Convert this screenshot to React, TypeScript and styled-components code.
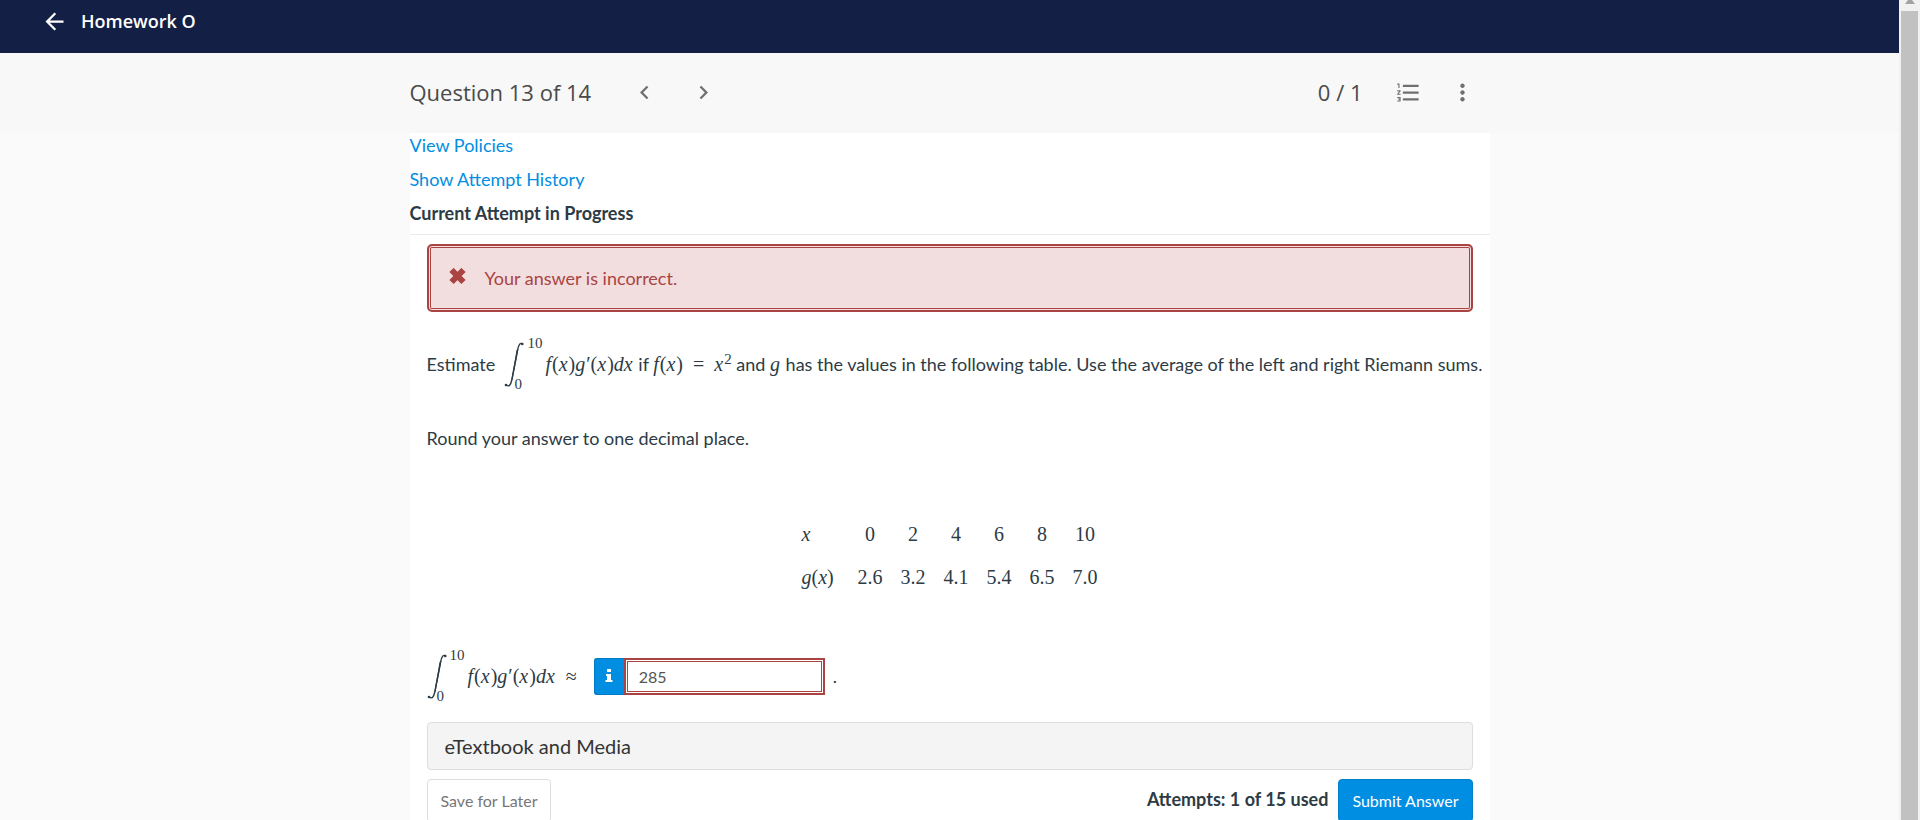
import React from "react";
import styled, { createGlobalStyle, css } from "styled-components";
import {
  MdArrowBack,
  MdChevronLeft,
  MdChevronRight,
  MdFormatListNumbered,
  MdMoreVert,
} from "react-icons/md";

const GlobalStyle = createGlobalStyle`
  * { box-sizing: border-box; }
  body {
    margin: 0;
    background: #fafafa;
    color: #2d3b45;
    font-family: Lato, "Liberation Sans", sans-serif;
    font-size: 18px;
    line-height: 24px;
  }
  button, input { font-family: inherit; }
`;

const errorFrame = css<{ $fill: string }>`
  border: 2px solid #a94442;
  background: ${(p) => p.$fill};
  box-shadow: inset 0 0 0 1px ${(p) => p.$fill}, inset 0 0 0 2px #a94442;
`;

const Window = styled.div`
  display: flex;
  height: 100vh;
  overflow: hidden;
`;

const Page = styled.div`
  flex: 1;
  min-width: 0;
`;

const TopBar = styled.header`
  display: flex;
  align-items: flex-start;
  height: 53px;
  padding: 8px 41px;
  gap: 13px;
  background: #141f45;
  color: #fff;
`;

const IconButton = styled.button<{ $tone?: string }>`
  display: flex;
  padding: 0;
  border: 0;
  background: none;
  color: ${(p) => p.$tone || "#6f6f6f"};
  font-size: 27px;
  cursor: pointer;
`;

const AssignmentTitle = styled.h1`
  margin: 0;
  font: 600 18px/27px "Open Sans", sans-serif;
`;

const QuestionBar = styled.div`
  height: 80px;
  background: #f8f8f8;
`;

const QuestionBarInner = styled.div`
  display: flex;
  align-items: center;
  max-width: 1080px;
  height: 100%;
  margin: 0 auto;
  padding: 0 14px 2px 0;
  color: #4a4a4a;
  font: 400 22px/30px "Open Sans", sans-serif;
`;

const QuestionTitle = styled.h2`
  margin: 0 40px 0 0;
  font: inherit;
`;

const Pager = styled.nav`
  display: flex;
  gap: 32px;
`;

const Tools = styled.div`
  display: flex;
  align-items: center;
  gap: 27px;
  margin-left: auto;
`;

const Score = styled.span`
  margin-right: 5px;
`;

const Panel = styled.main`
  max-width: 1080px;
  margin: 0 auto;
  background: #fff;
`;

const PanelHead = styled.div`
  display: flex;
  flex-direction: column;
  align-items: flex-start;
  gap: 10px;
  padding-bottom: 9px;
  border-bottom: 1px solid #ebebeb;
`;

const TextLink = styled.a`
  color: #008ee2;
  text-decoration: none;
`;

const Status = styled.h3`
  margin: 0;
  font-size: 18px;
  line-height: 24px;
  font-weight: 700;
`;

const Body = styled.div`
  padding: 9px 17px 0;
`;

const Alert = styled.div<{ $fill: string }>`
  display: flex;
  align-items: center;
  gap: 18px;
  height: 68px;
  padding: 0 20px;
  border-radius: 5px;
  color: #a94442;
  ${errorFrame}
`;

const Problem = styled.p`
  display: flex;
  align-items: center;
  height: 64px;
  margin: 20px 0 30px;
  white-space: pre;
`;

const Plain = styled.p`
  margin: 0;
`;

const MathText = styled.span`
  display: inline-flex;
  align-items: center;
  font-family: "Liberation Serif", serif;
  font-size: 20px;
  line-height: 24px;
  white-space: pre;

  i { padding-right: 1px; }
  sup { font-size: 15px; line-height: 15px; align-self: flex-start; }
`;

const Sign = styled.svg`
  width: 20px;
  height: 47px;
`;

const Limits = styled.span`
  display: flex;
  flex-direction: column;
  justify-content: space-between;
  height: 56px;
  font-size: 15px;
  line-height: 15px;
`;

const Upper = styled.span`
  padding-left: 3px;
`;

const Lower = styled.span`
  margin-left: -10px;
`;

const Integrand = styled.span`
  padding-left: 3px;
`;

const Values = styled.table`
  margin: 62px auto 50px;
  padding-left: 9px;
  border-spacing: 0;
  font: 20px/24px "Liberation Serif", serif;

  th, td { height: 43px; padding: 0; font-weight: 400; text-align: center; }
  th { width: 47px; text-align: left; }
  td { width: 43px; }
`;

const AnswerRow = styled.div`
  display: flex;
  align-items: center;
  height: 56px;
`;

const InputGroup = styled.div`
  display: flex;
  height: 37px;
  margin: 0 8px 0 17px;
`;

const InfoButton = styled.button`
  display: flex;
  align-items: center;
  justify-content: center;
  width: 30px;
  padding: 0;
  border: 1px solid #0079c1;
  border-right: 0;
  border-radius: 3px 0 0 3px;
  background: #008ee2;
  color: #fff;
`;

const AnswerInput = styled.input<{ $fill: string }>`
  width: 201px;
  padding: 0 13px;
  color: #555;
  font-size: 16px;
  ${errorFrame}
`;

const MediaButton = styled.button`
  display: block;
  width: 100%;
  height: 48px;
  margin: 18px 0 9px;
  padding: 0 17px;
  border: 1px solid #ddd;
  border-radius: 4px;
  background: #f4f4f4;
  color: #333;
  font-size: 20px;
  text-align: left;
`;

const Footer = styled.div`
  display: flex;
  align-items: flex-start;
  gap: 10px;
`;

const ActionButton = styled.button<{ $primary?: boolean }>`
  height: 43px;
  padding: 0 13px;
  border: 1px solid ${(p) => (p.$primary ? "#0081cd" : "#ddd")};
  border-radius: 4px;
  background: ${(p) => (p.$primary ? "#008ee2" : "#fff")};
  color: ${(p) => (p.$primary ? "#fff" : "#777")};
  font-size: 16px;
  cursor: pointer;
`;

const Attempts = styled.strong`
  margin: 8px 0 0 auto;
  font-weight: 700;
`;

const ScrollTrack = styled.div`
  display: flex;
  flex-direction: column;
  align-items: center;
  width: 21px;
  background: #f1f1f1;
`;

const ScrollUp = styled.svg`
  width: 10px;
  height: 4px;
  margin-bottom: 7px;
  flex: none;
`;

const ScrollThumb = styled.div`
  flex: 1;
  width: 17px;
  background: #c1c1c1;
`;

const xs = ["0", "2", "4", "6", "8", "10"];
const gs = ["2.6", "3.2", "4.1", "5.4", "6.5", "7.0"];

function Integral() {
  return (
    <MathText>
      <Sign viewBox="0 0 20 47" aria-label="integral">
        <path
          d="M2.4 44.2C5 46 6.700 44 7.800 39L13.600 9C14.600 3.500 16.200 1.500 18.400 2.700"
          fill="none"
          stroke="#2d3b45"
          strokeWidth="1.400"
          strokeLinecap="round"
        />
        <path d="M7 41L12.600 9L14.400 8L8.700 38Z" fill="#2d3b45" />
        <circle cx="2" cy="44" r="1.300" fill="#2d3b45" />
        <circle cx="18.300" cy="3" r="1.300" fill="#2d3b45" />
      </Sign>
      <Limits>
        <Upper>10</Upper>
        <Lower>0</Lower>
      </Limits>
      <Integrand>
        <i>f</i>(<i>x</i>)<i>g</i>′(<i>x</i>)<i>dx</i>
      </Integrand>
    </MathText>
  );
}

export default function App() {
  return (
    <Window>
      <GlobalStyle />
      <Page>
        <TopBar>
          <IconButton $tone="#fff" aria-label="Back">
            <MdArrowBack />
          </IconButton>
          <AssignmentTitle>Homework O</AssignmentTitle>
        </TopBar>
        <QuestionBar>
          <QuestionBarInner>
            <QuestionTitle>Question 13 of 14</QuestionTitle>
            <Pager aria-label="Questions">
              <IconButton aria-label="Previous question">
                <MdChevronLeft />
              </IconButton>
              <IconButton aria-label="Next question">
                <MdChevronRight />
              </IconButton>
            </Pager>
            <Tools>
              <Score>0 / 1</Score>
              <IconButton aria-label="Question list">
                <MdFormatListNumbered />
              </IconButton>
              <IconButton aria-label="More options">
                <MdMoreVert />
              </IconButton>
            </Tools>
          </QuestionBarInner>
        </QuestionBar>
        <Panel>
          <PanelHead>
            <TextLink href="#policies">View Policies</TextLink>
            <TextLink href="#history">Show Attempt History</TextLink>
            <Status>Current Attempt in Progress</Status>
          </PanelHead>
          <Body>
            <Alert role="alert" $fill="#f2dede">
              <svg width="18" height="20" viewBox="0 0 18 20" aria-hidden="true">
                <path
                  d="M2.500 2L14.500 14M14.500 2L2.500 14"
                  stroke="#a94442"
                  strokeWidth="6"
                />
              </svg>
              Your answer is incorrect.
            </Alert>
            <Problem>
              {"Estimate  "}
              <Integral />
              {" if "}
              <MathText>
                <span>
                  <i>f</i>(<i>x</i>)  =  <i>x</i>
                </span>
                <sup>2</sup>
              </MathText>
              {" and "}
              <MathText>
                <i>g</i>
              </MathText>
              {" has the values in the following table. Use the average of the left and right Riemann sums."}
            </Problem>
            <Plain>Round your answer to one decimal place.</Plain>
            <Values>
              <tbody>
                <tr>
                  <th scope="row">
                    <i>x</i>
                  </th>
                  {xs.map((v) => (
                    <td key={v}>{v}</td>
                  ))}
                </tr>
                <tr>
                  <th scope="row">
                    <i>g</i>(<i>x</i>)
                  </th>
                  {gs.map((v) => (
                    <td key={v}>{v}</td>
                  ))}
                </tr>
              </tbody>
            </Values>
            <AnswerRow>
              <Integral />
              <MathText>{"  ≈"}</MathText>
              <InputGroup>
                <InfoButton aria-label="Answer information">
                  <svg width="8" height="14" viewBox="0 0 8 14">
                    <path
                      d="M2 0H6V3H2ZM1 5H6V11H7.500V13H0.500V11H2V7H1Z"
                      fill="#fff"
                    />
                  </svg>
                </InfoButton>
                <AnswerInput aria-label="Answer" defaultValue="285" $fill="#fff" />
              </InputGroup>
              .
            </AnswerRow>
            <MediaButton>eTextbook and Media</MediaButton>
            <Footer>
              <ActionButton>Save for Later</ActionButton>
              <Attempts>Attempts: 1 of 15 used</Attempts>
              <ActionButton $primary>Submit Answer</ActionButton>
            </Footer>
          </Body>
        </Panel>
      </Page>
      <ScrollTrack aria-hidden="true">
        <ScrollUp viewBox="0 0 10 4">
          <path d="M3 0H7L10 4H0Z" fill="#a3a3a3" />
        </ScrollUp>
        <ScrollThumb />
      </ScrollTrack>
    </Window>
  );
}
